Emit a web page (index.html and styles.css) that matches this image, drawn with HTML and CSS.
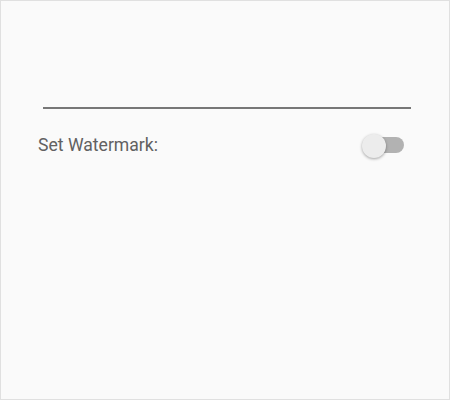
FILE: index.html
```html
<!DOCTYPE html>
<html>
<head>
<meta charset="utf-8">
<link rel="stylesheet" href="styles.css">
</head>
<body>
<div class="frame">
  <div class="field"></div>
  <div class="row">
    <span class="label">Set Watermark:</span>
    <div class="switch">
      <div class="track"></div>
      <div class="thumb"></div>
    </div>
  </div>
</div>
</body>
</html>
```
FILE: styles.css
```css
html, body {
  margin: 0;
  padding: 0;
  background: #fafafa;
}
.frame {
  box-sizing: border-box;
  width: 450px;
  height: 400px;
  border: 1px solid #e0e0e0;
  background: #fafafa;
  padding: 106px 37px 0 37px;
  font-family: Roboto, "Liberation Sans", sans-serif;
}
.field {
  height: 2px;
  background: #777777;
  margin: 0 1px 0 5px;
}
.row {
  display: flex;
  align-items: center;
  justify-content: space-between;
  margin-top: 24px;
  height: 24px;
  padding-right: 8px;
}
.label {
  font-size: 17.6px;
  color: #616161;
}
.switch {
  position: relative;
  width: 42px;
  height: 24px;
}
.track {
  position: absolute;
  left: 6px;
  top: 4px;
  width: 36px;
  height: 16px;
  border-radius: 8px;
  background: #b2b2b2;
}
.thumb {
  position: absolute;
  left: 0;
  top: 1px;
  width: 24px;
  height: 24px;
  border-radius: 50%;
  background: #ececec;
  box-shadow: 0 1px 3px rgba(0,0,0,0.35);
}
```
